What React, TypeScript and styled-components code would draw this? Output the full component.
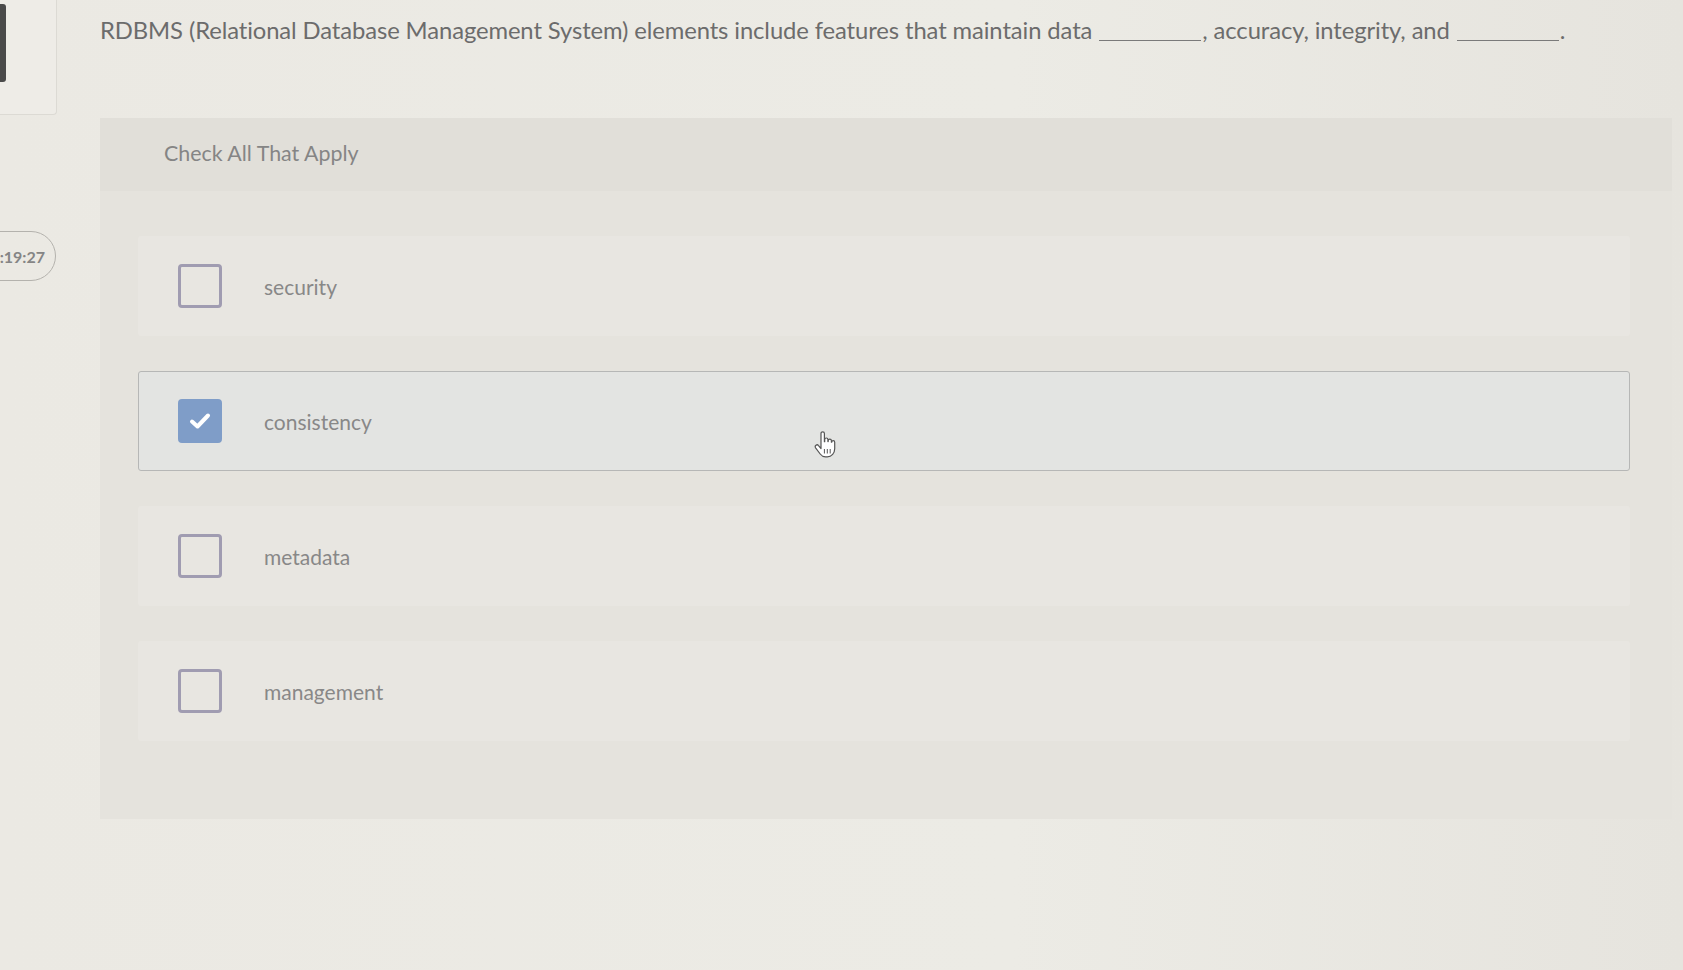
import React from 'react'
import styled, { createGlobalStyle } from 'styled-components'

const GlobalStyle = createGlobalStyle`
  html, body {
    margin: 0;
    padding: 0;
    background: #eae8e2;
    font-family: Lato, 'Open Sans', sans-serif;
  }
  #root {
    min-height: 970px;
  }
`

const Page = styled.div`
  position: relative;
  display: flex;
  width: 1683px;
  height: 970px;
  overflow: hidden;
  background: linear-gradient(90deg, #ebe9e3 0%, #ecebe5 60%, #e6e4de 100%);
`

const Sidebar = styled.div`
  width: 57px;
  flex-shrink: 0;
  display: flex;
  flex-direction: column;
`

const SideTop = styled.div`
  height: 115px;
  border-right: 1px solid #dcdad4;
  border-bottom: 1px solid #dcdad4;
  border-bottom-right-radius: 4px;
  background: #eeece7;
  padding-top: 4px;
  box-sizing: border-box;
`

const DarkTab = styled.div`
  width: 6px;
  height: 78px;
  background: #4a4a4a;
  border-radius: 0 3px 3px 0;
`

const TimerPill = styled.div`
  margin-top: 116px;
  margin-left: -22px;
  width: 78px;
  height: 50px;
  box-sizing: border-box;
  border: 1.5px solid #b4b2ad;
  border-radius: 0 25px 25px 0;
  display: flex;
  align-items: center;
  justify-content: flex-end;
  padding-right: 10px;
  font-size: 16px;
  font-weight: 700;
  color: #858585;
`

const Main = styled.div`
  flex: 1;
  padding: 13px 11px 0 43px;
  display: flex;
  flex-direction: column;
`

const Question = styled.div`
  font-size: 23.8px;
  color: #6c6c6c;
  line-height: 34px;
  white-space: nowrap;
  letter-spacing: -0.1px;
`

const Blank = styled.span`
  display: inline-block;
  width: 102px;
  border-bottom: 1.5px solid #7a7a7a;
  margin: 0 1px 0 7px;
  vertical-align: -2px;
`

const Panel = styled.div`
  margin-top: 71px;
  height: 701px;
  background: #e5e3dd;
  display: flex;
  flex-direction: column;
`

const PanelHeader = styled.div`
  height: 73px;
  background: #e1dfd9;
  display: flex;
  align-items: center;
  padding-left: 64px;
  padding-bottom: 4px;
  box-sizing: border-box;
  font-size: 21.4px;
  color: #858585;
`

const Options = styled.div`
  display: flex;
  flex-direction: column;
  gap: 35px;
  padding: 45px 42px 0 38px;
`

const Row = styled.div<{ $checked: boolean }>`
  height: 100px;
  box-sizing: border-box;
  display: flex;
  align-items: center;
  padding-left: 39px;
  gap: 42px;
  border-radius: 3px;
  background: ${p => (p.$checked ? '#e3e4e2' : '#e8e6e1')};
  border: 1.5px solid ${p => (p.$checked ? '#b6b7b6' : 'transparent')};
`

const Box = styled.div<{ $checked: boolean }>`
  width: 44px;
  height: 44px;
  box-sizing: border-box;
  border-radius: 4px;
  border: 3px solid ${p => (p.$checked ? '#7f9dc8' : '#a09cb1')};
  background: ${p => (p.$checked ? '#7f9dc8' : 'transparent')};
  display: flex;
  align-items: center;
  justify-content: center;
`

const Label = styled.span`
  font-size: 21px;
  color: #888888;
`

const Cursor = styled.svg`
  position: absolute;
  left: 814px;
  top: 431px;
`

const options = [
  { label: 'security', checked: false },
  { label: 'consistency', checked: true },
  { label: 'metadata', checked: false },
  { label: 'management', checked: false },
]

export default function App() {
  return (
    <Page>
      <GlobalStyle />
      <Sidebar>
        <SideTop>
          <DarkTab />
        </SideTop>
        <TimerPill>:19:27</TimerPill>
      </Sidebar>
      <Main>
        <Question>
          RDBMS (Relational Database Management System) elements include features that maintain data
          <Blank />, accuracy, integrity, and<Blank />.
        </Question>
        <Panel>
          <PanelHeader>Check All That Apply</PanelHeader>
          <Options>
            {options.map(o => (
              <Row key={o.label} $checked={o.checked}>
                <Box $checked={o.checked}>
                  {o.checked && (
                    <svg width="22" height="18" viewBox="0 0 22 18">
                      <path d="M3 9.5 L8.5 14.5 L19 3.5" fill="none" stroke="#fff" strokeWidth="4" strokeLinecap="round" strokeLinejoin="round" />
                    </svg>
                  )}
                </Box>
                <Label>{o.label}</Label>
              </Row>
            ))}
          </Options>
        </Panel>
      </Main>
      <Cursor width="24" height="28" viewBox="0 0 24 28">
        <path
          d="M7 2.5c0-1 .8-1.7 1.7-1.7s1.7.7 1.7 1.7v8.2h.3V8.6c0-1 .8-1.6 1.6-1.6s1.6.7 1.6 1.6v2h.3V9.7c0-.9.8-1.6 1.6-1.6s1.6.7 1.6 1.6v1.5h.3c0-.9.7-1.5 1.5-1.5s1.5.7 1.5 1.6v6.5c0 4.3-3 8-7.4 8h-1.8c-2.3 0-4-1-5.3-2.8L1.6 16.8c-.6-.9-.4-2 .4-2.6.8-.6 1.9-.4 2.5.4L7 17.5V2.5z"
          fill="#fff"
          stroke="#555"
          strokeWidth="1.2"
          strokeLinejoin="round"
        />
        <path d="M10.4 18v4.5M13.3 18v4.5M16.2 18v4.5" stroke="#555" strokeWidth="1" />
      </Cursor>
    </Page>
  )
}
